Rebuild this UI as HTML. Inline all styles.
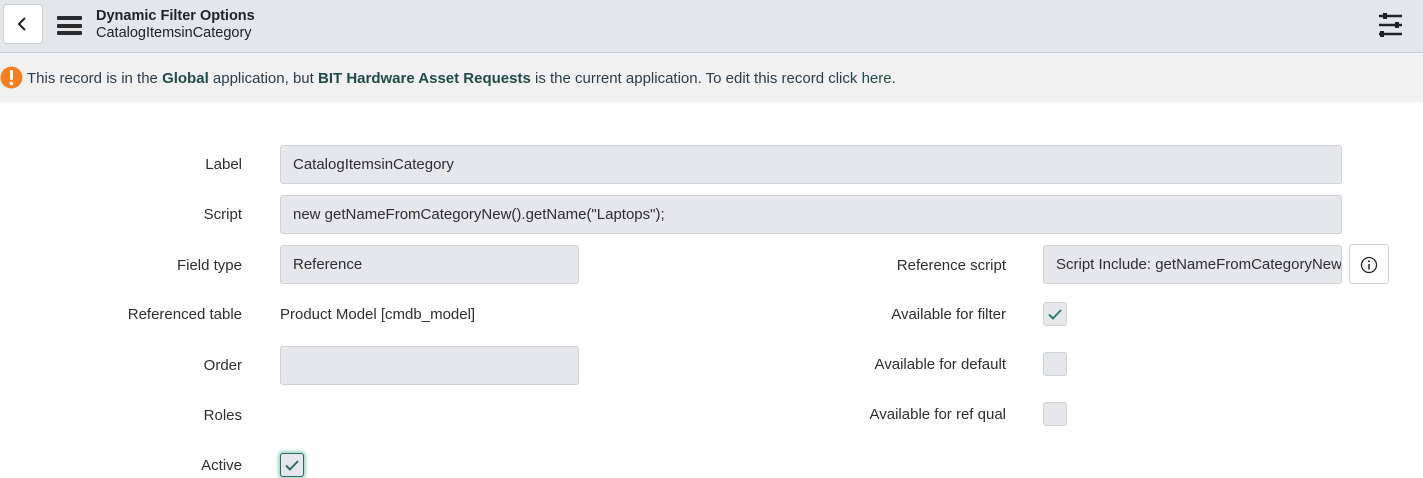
<!DOCTYPE html>
<html><head><style>
body{margin:0;width:1423px;height:478px;overflow:hidden;background:#fff;font-family:"Liberation Sans",sans-serif;color:#2e2e2e;position:relative}
.a{position:absolute}
.hdr{left:0;top:0;width:1423px;height:52px;background:#e4e7ea;border-bottom:1px solid #c9cbcd}
.note{left:0;top:53px;width:1423px;height:49px;background:#f1f1f1}
.lbl{font-size:15px;text-align:right;width:300px;line-height:20px}
.inp{background:#e5e7ea;border:1px solid #cfd2d5;border-radius:3px;box-sizing:border-box;height:39px;font-size:15px;line-height:38px;padding-left:12px;padding-right:4px;white-space:nowrap;overflow:hidden}
.cb{width:24px;height:24px;box-sizing:border-box;border:1px solid #cfd2d5;background:#e5e7ea;border-radius:3px}
b{color:#1f4d45}
</style></head><body>
<div class="a hdr"></div>
<div class="a" style="left:3px;top:4px;width:40px;height:40px;box-sizing:border-box;background:#fff;border:1px solid #cfd2d5;border-radius:4px"></div>
<svg class="a" style="left:14px;top:15px" width="18" height="18"><path d="M11 3 L5 9 L11 15" stroke="#222" stroke-width="2" fill="none"/></svg>
<div class="a" style="left:57px;top:16px;width:25px;height:4px;background:#2b2b2b;border-radius:1px"></div>
<div class="a" style="left:57px;top:24px;width:25px;height:4px;background:#2b2b2b;border-radius:1px"></div>
<div class="a" style="left:57px;top:31px;width:25px;height:4px;background:#2b2b2b;border-radius:1px"></div>
<div class="a" style="left:96px;top:7px;font-size:14.5px;font-weight:bold;line-height:18px;color:#222">Dynamic Filter Options</div>
<div class="a" style="left:96px;top:24px;font-size:14.5px;line-height:18px;color:#222">CatalogItemsinCategory</div>
<svg class="a" style="left:1377px;top:12px" width="28" height="26"><g stroke="#222" stroke-width="2.5"><path d="M2 4H25M2 13H25M2 22H25"/></g><g fill="#222"><rect x="6" y="1" width="4" height="6"/><rect x="18" y="10" width="4" height="6"/><rect x="3" y="19" width="4" height="6"/></g></svg>
<div class="a note"></div>
<svg class="a" style="left:0;top:66px" width="23" height="23"><circle cx="11.5" cy="11.5" r="11" fill="#f48024"/><rect x="10" y="4" width="3" height="10" rx="1" fill="#fff"/><circle cx="11.5" cy="17.5" r="1.8" fill="#fff"/></svg>
<div class="a" style="left:27px;top:69px;font-size:15px;line-height:20px;color:#2e3d49;white-space:nowrap">This record is in the <b>Global</b> application, but <b>BIT Hardware Asset Requests</b> is the current application. To edit this record click <span style="color:#1f4d45">here</span>.</div>

<div class="a lbl" style="left:-58px;top:155px">Label</div>
<div class="a inp" style="left:280px;top:145px;width:1062px">CatalogItemsinCategory</div>
<div class="a lbl" style="left:-58px;top:205px">Script</div>
<div class="a inp" style="left:280px;top:195px;width:1062px">new getNameFromCategoryNew().getName("Laptops");</div>
<div class="a lbl" style="left:-58px;top:256px">Field type</div>
<div class="a inp" style="left:280px;top:245px;width:299px">Reference</div>
<div class="a lbl" style="left:706px;top:256px">Reference script</div>
<div class="a inp" style="left:1043px;top:245px;width:299px">Script Include: getNameFromCategoryNew</div>
<div class="a" style="left:1349px;top:244px;width:40px;height:40px;box-sizing:border-box;border:1px solid #cfd2d5;border-radius:3px;background:#fff"></div>
<svg class="a" style="left:1360px;top:256px" width="18" height="18"><circle cx="9" cy="9" r="7.5" stroke="#222" stroke-width="1.3" fill="none"/><path d="M9 8V13.5" stroke="#222" stroke-width="1.5"/><circle cx="9" cy="5.3" r="1" fill="#222"/></svg>
<div class="a lbl" style="left:-58px;top:305px">Referenced table</div>
<div class="a" style="left:280px;top:305px;font-size:15px;line-height:20px">Product Model [cmdb_model]</div>
<div class="a lbl" style="left:706px;top:305px">Available for filter</div>
<div class="a cb" style="left:1043px;top:302px"></div>
<svg class="a" style="left:1046px;top:305px" width="18" height="18"><path d="M3 9.5L7 13.5L15 5" stroke="#2e7d6e" stroke-width="2" fill="none"/></svg>
<div class="a lbl" style="left:-58px;top:356px">Order</div>
<div class="a inp" style="left:280px;top:346px;width:299px"></div>
<div class="a lbl" style="left:706px;top:355px">Available for default</div>
<div class="a cb" style="left:1043px;top:352px"></div>
<div class="a lbl" style="left:-58px;top:406px">Roles</div>
<div class="a lbl" style="left:706px;top:405px">Available for ref qual</div>
<div class="a cb" style="left:1043px;top:402px"></div>
<div class="a lbl" style="left:-58px;top:456px">Active</div>
<div class="a cb" style="left:280px;top:453px;border:1px solid #2e6b63;box-shadow:0 0 3px 2px #9fd6cb"></div>
<svg class="a" style="left:283px;top:456px" width="18" height="18"><path d="M3 9.5L7 13.5L15 5" stroke="#2e6b63" stroke-width="2" fill="none"/></svg>
</body></html>
